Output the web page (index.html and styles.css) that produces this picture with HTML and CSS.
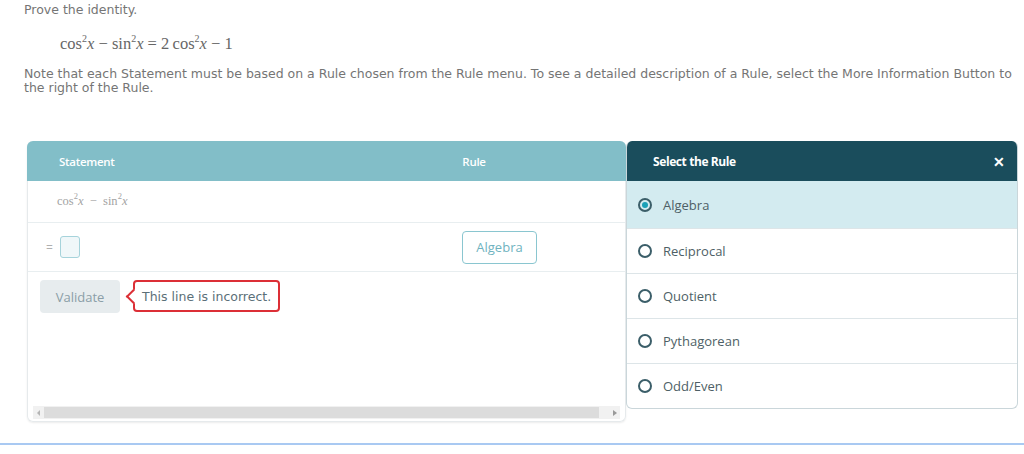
FILE: index.html
```html
<!DOCTYPE html>
<html lang="en">
<head>
<meta charset="UTF-8" />
<title>Prove the identity</title>
<link rel="stylesheet" href="styles.css">
</head>
<body>

<div class="page">
  <p class="prompt">Prove the identity.</p>
  <p class="identity">cos<sup>2</sup><i>x</i> &minus; sin<sup>2</sup><i>x</i> = 2&thinsp;cos<sup>2</sup><i>x</i> &minus; 1</p>
  <p class="note">Note that each Statement must be based on a Rule chosen from the Rule menu. To see a detailed description of a Rule, select the More Information Button to the right of the Rule.</p>

  <div class="workspace">
    <div class="proof-card">
      <div class="proof-head">
        <div class="col-statement">Statement</div>
        <div class="col-rule">Rule</div>
      </div>
      <div class="proof-row first">
        <span class="small-math">cos<sup>2</sup><i>x</i> &nbsp;&minus;&nbsp; sin<sup>2</sup><i>x</i></span>
      </div>
      <div class="proof-row entry">
        <span class="eq">=</span>
        <span class="math-input"></span>
        <button class="rule-btn">Algebra</button>
      </div>
      <div class="proof-row check">
        <button class="validate-btn">Validate</button>
        <div class="feedback">This line is incorrect.</div>
      </div>
      <div class="scrollbar">
        <span class="arrow left"></span>
        <span class="track"></span>
        <span class="arrow right"></span>
      </div>
    </div>

    <div class="rule-panel">
      <div class="panel-head">
        <span>Select the Rule</span>
        <span class="close">&#x2715;</span>
      </div>
      <label class="rule-option selected"><span class="radio"></span>Algebra</label>
      <label class="rule-option"><span class="radio"></span>Reciprocal</label>
      <label class="rule-option"><span class="radio"></span>Quotient</label>
      <label class="rule-option"><span class="radio"></span>Pythagorean</label>
      <label class="rule-option"><span class="radio"></span>Odd/Even</label>
    </div>
  </div>
</div>

<div class="bottom-rule"></div>

</body>
</html>
```

FILE: styles.css
```css
body {
  margin: 0;
  font-family: 'DejaVu Sans', Verdana, sans-serif;
  background-color: #fff;
  color: #757575;
}
.page {
  padding: 2px 0 0 24px;
  height: 443px;
  box-sizing: border-box;
}
p {
  margin: 0;
}
.prompt {
  font-size: 12.5px;
  line-height: 16px;
}
.identity {
  font-family: 'Liberation Serif', 'Times New Roman', serif;
  font-size: 16.5px;
  color: #666;
  margin: 16px 0 0 36px;
  line-height: 20px;
}
.identity sup {
  font-size: 10px;
  vertical-align: 7px;
  line-height: 0;
}
.note {
  font-size: 12.5px;
  line-height: 14px;
  margin-top: 13px;
  padding-right: 10px;
}
.workspace {
  display: flex;
  align-items: flex-start;
  margin: 46px 0 0 3px;
}
.proof-card {
  flex: none;
  width: 599px;
  height: 281px;
  box-sizing: border-box;
  border: 1px solid #e6eaec;
  border-top: none;
  border-radius: 6px;
  box-shadow: 0 1px 2px rgba(0,0,0,0.08);
  display: flex;
  flex-direction: column;
  font-family: 'Open Sans', 'Liberation Sans', sans-serif;
}
.proof-head {
  display: flex;
  height: 40px;
  align-items: center;
  background-color: #82bec8;
  color: #fff;
  font-size: 11.5px;
  font-weight: 600;
  letter-spacing: -0.3px;
  border-radius: 6px 6px 0 0;
  margin: 0 -1px;
}
.col-statement {
  padding-left: 32px;
  flex: 1;
}
.col-rule {
  width: 300px;
  text-align: center;
  padding-right: 2px;
}
.proof-row {
  display: flex;
  align-items: center;
  border-bottom: 1px solid #e8eef0;
}
.proof-row.first {
  height: 41px;
  padding-left: 29px;
}
.small-math {
  font-family: 'Liberation Serif', serif;
  font-size: 12.5px;
  color: #a3a3a3;
}
.small-math sup {
  font-size: 8.5px;
  vertical-align: 6px;
  line-height: 0;
}
.proof-row.entry {
  height: 48px;
  padding-left: 18px;
}
.eq {
  color: #b0b0b0;
  font-size: 12px;
  width: 14px;
}
.math-input {
  width: 18px;
  height: 20px;
  border: 1px solid #a6d3db;
  border-radius: 3px;
  background-color: #f0f7f9;
}
.rule-btn {
  margin-left: auto;
  margin-right: 88px;
  width: 75px;
  height: 33px;
  border: 1px solid #8ac6d0;
  border-radius: 4px;
  background: #fff;
  color: #6fb3c0;
  font-family: 'Open Sans', sans-serif;
  font-size: 13px;
  padding: 0;
}
.proof-row.check {
  border-bottom: none;
  align-items: flex-start;
  padding: 8px 0 0 12px;
  flex: 1;
}
.validate-btn {
  width: 80px;
  height: 33px;
  border: none;
  border-radius: 4px;
  background-color: #e7ecee;
  color: #8b9ea7;
  font-family: 'Open Sans', sans-serif;
  font-size: 13px;
  padding: 0;
}
.feedback {
  position: relative;
  margin-left: 13px;
  height: 32px;
  box-sizing: border-box;
  padding: 0 7px;
  line-height: 29px;
  border: 2px solid #dc2f36;
  border-radius: 4px;
  color: #5b6f78;
  font-family: 'DejaVu Sans', sans-serif;
  font-size: 12.5px;
}
.feedback::before {
  content: '';
  position: absolute;
  left: -7px;
  top: 9px;
  width: 9px;
  height: 9px;
  background: #fff;
  border-left: 2px solid #dc2f36;
  border-bottom: 2px solid #dc2f36;
  transform: rotate(45deg);
}
.scrollbar {
  display: flex;
  align-items: center;
  height: 13px;
  margin: 0 5px 2px 5px;
  background: #f1f1f1;
}
.track {
  flex: 1;
  height: 11px;
  background: #dcdcdc;
  margin: 0 10px 0 0;
}
.arrow {
  width: 11px;
  height: 11px;
  position: relative;
}
.arrow.left::after,
.arrow.right::after {
  content: '';
  position: absolute;
  top: 3px;
  border: 3px solid transparent;
}
.arrow.left::after {
  left: 1px;
  border-right: 3px solid #b5b5b5;
}
.arrow.right::after {
  left: 4px;
  border-left: 4px solid #999;
}
.rule-panel {
  flex: none;
  width: 392px;
  box-sizing: border-box;
  border: 1px solid #cad6da;
  border-top: none;
  border-radius: 6px;
  font-family: 'Open Sans', 'Liberation Sans', sans-serif;
  background: #fff;
  overflow: hidden;
}
.panel-head {
  display: flex;
  justify-content: space-between;
  align-items: center;
  height: 40px;
  background-color: #1a4d5c;
  color: #fff;
  font-size: 12px;
  font-weight: bold;
  letter-spacing: -0.4px;
  padding: 0 13px 0 27px;
  margin: 0 -1px;
}
.close {
  font-size: 14px;
  font-weight: bold;
}
.rule-option {
  display: flex;
  align-items: center;
  height: 45px;
  box-sizing: border-box;
  border-top: 1px solid #dde5e8;
  padding-left: 11px;
  color: #4e5f66;
  font-size: 13px;
}
.rule-option:first-of-type {
  border-top: none;
  height: 47px;
}
.rule-option.selected {
  background-color: #d3ebf0;
}
.radio {
  width: 10px;
  height: 10px;
  border: 2px solid #3b5e69;
  border-radius: 50%;
  margin-right: 11px;
  position: relative;
}
.selected .radio::after {
  content: '';
  position: absolute;
  left: 2px;
  top: 2px;
  width: 6px;
  height: 6px;
  border-radius: 50%;
  background: #1aa0b7;
}
.bottom-rule {
  height: 2px;
  background-color: #a9c9f2;
}
```
